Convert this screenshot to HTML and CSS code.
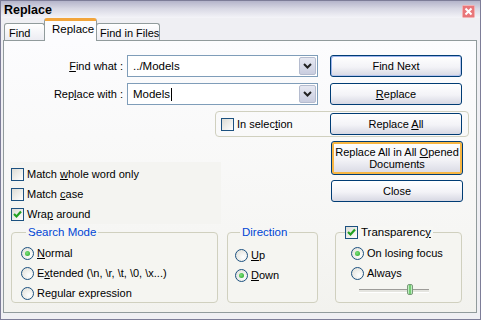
FILE: index.html
```html
<!DOCTYPE html>
<html lang="en">
  <head>
    <meta charset="UTF-8">
    <title>Replace</title>
    <link rel="stylesheet" href="styles.css">
  </head>
  <body>
    <div class="window">
      <div class="titlebar">
        <span class="title">Replace</span>
        <span class="close">
          <svg width="13" height="13" viewBox="0 0 13 13">
            <rect x="0.5" y="0.5" width="12" height="12" rx="1" fill="#e8767a" stroke="#f3b2b4"/>
            <path d="M3.5 3.5 L9.5 9.5 M9.5 3.5 L3.5 9.5" stroke="#fff" stroke-width="2"/>
          </svg>
        </span>
      </div>

      <div class="tabs">
        <div class="tab tab-find">Find</div>
        <div class="tab tab-replace active">Replace</div>
        <div class="tab tab-files">Find in Files</div>
      </div>

      <div class="panel">
        <!-- search / replace fields -->
        <div class="field-row">
          <span class="field-label"><u>F</u>ind what :</span>
          <div class="combo">
            <span class="combo-text">../Models</span>
            <span class="combo-btn"><svg width="9" height="6" viewBox="0 0 9 6"><path d="M1 1 L4.5 4.5 L8 1" fill="none" stroke="#222" stroke-width="2"/></svg></span>
          </div>
          <button class="btn focused">Find Next</button>
        </div>
        <div class="field-row">
          <span class="field-label">Rep<u>l</u>ace with :</span>
          <div class="combo">
            <span class="combo-text">Models<span class="caret"></span></span>
            <span class="combo-btn"><svg width="9" height="6" viewBox="0 0 9 6"><path d="M1 1 L4.5 4.5 L8 1" fill="none" stroke="#222" stroke-width="2"/></svg></span>
          </div>
          <button class="btn"><u>R</u>eplace</button>
        </div>

        <div class="selection-box">
          <span class="check"></span>
          <span class="check-label">In selec<u>t</u>ion</span>
          <button class="btn">Replace <u>A</u>ll</button>
        </div>

        <!-- options and remaining buttons -->
        <div class="middle">
          <div class="options">
            <div class="opt-row"><span class="check"></span><span class="check-label">Match <u>w</u>hole word only</span></div>
            <div class="opt-row"><span class="check"></span><span class="check-label">Match <u>c</u>ase</span></div>
            <div class="opt-row"><span class="check on"><svg width="11" height="11" viewBox="0 0 11 11"><path d="M2 5 L4.5 7.5 L9 2.5" fill="none" stroke="#21a121" stroke-width="2.2"/></svg></span><span class="check-label">Wra<u>p</u> around</span></div>
          </div>
          <div class="side-buttons">
            <button class="btn tall hot">Replace All in All <u>O</u>pened<br>Documents</button>
            <button class="btn">Close</button>
          </div>
        </div>

        <!-- group boxes -->
        <div class="groups">
          <fieldset class="group group-mode">
            <legend>Search Mode</legend>
            <div class="radio-row"><span class="radio on"></span><span><u>N</u>ormal</span></div>
            <div class="radio-row"><span class="radio"></span><span>E<u>x</u>tended (\n, \r, \t, \0, \x...)</span></div>
            <div class="radio-row"><span class="radio"></span><span>Re<u>g</u>ular expression</span></div>
          </fieldset>
          <fieldset class="group group-dir">
            <legend>Direction</legend>
            <div class="radio-row"><span class="radio"></span><span><u>U</u>p</span></div>
            <div class="radio-row"><span class="radio on"></span><span><u>D</u>own</span></div>
          </fieldset>
          <fieldset class="group group-trans">
            <legend><span class="check on"><svg width="11" height="11" viewBox="0 0 11 11"><path d="M2 5 L4.5 7.5 L9 2.5" fill="none" stroke="#21a121" stroke-width="2.2"/></svg></span><span class="check-label">Transparenc<u>y</u></span></legend>
            <div class="radio-row"><span class="radio on"></span><span>On losing focus</span></div>
            <div class="radio-row"><span class="radio"></span><span>Always</span></div>
            <div class="slider">
              <div class="track"></div>
              <div class="thumb"></div>
            </div>
          </fieldset>
        </div>
      </div>
    </div>
  </body>
</html>
```

FILE: styles.css
```css
body {
  margin: 0;
  font-family: "Liberation Sans", Arial, sans-serif;
  font-size: 11px;
  color: #000;
  background: #ecebf2;
}

u {
  text-decoration: underline;
}

.window {
  width: 481px;
  height: 320px;
  box-sizing: border-box;
  border: 1px solid #7d7d98;
  padding: 0 3px 6px 2px;
  background: #efeff3;
}

.titlebar {
  height: 17px;
  margin: 0 -3px 0 -2px;
  padding: 0 5px 0 3px;
  display: flex;
  align-items: center;
  justify-content: space-between;
  background: linear-gradient(#b4b4ca, #d8d8e4 45%, #f4f4f8);
}

.title {
  font-weight: bold;
  font-size: 12.5px;
  padding-top: 1px;
}

.close {
  display: flex;
  margin-top: 3px;
}

.tabs {
  height: 22px;
  padding-left: 1px;
  display: flex;
  align-items: flex-end;
}

.tab {
  box-sizing: border-box;
  height: 17px;
  border: 1px solid #919b9c;
  border-bottom: none;
  border-radius: 3px 3px 0 0;
  background: linear-gradient(#ffffff, #ececf2);
  padding: 3px 0 0 4px;
  line-height: 13px;
  white-space: nowrap;
}

.tab-find { width: 41px; }
.tab-replace { width: 53px; }
.tab-files { width: 64px; padding-left: 3px; }

.tab.active {
  height: 23px;
  margin: 0 -1px -1px -1px;
  background: #fcfcfe;
  border-top: 3px solid #f2a53c;
  padding: 2px 0 0 7px;
  position: relative;
  z-index: 1;
  font-size: 11.5px;
}

.panel {
  box-sizing: border-box;
  height: 273px;
  border: 1px solid #919b9c;
  background: linear-gradient(#fcfcfe, #f6f6f4 70%, #f2f2ee);
  padding-top: 14px;
}

.field-row {
  display: flex;
  align-items: center;
  height: 22px;
  margin-bottom: 6px;
}

.field-label {
  width: 119px;
  text-align: right;
  margin-right: 4px;
}

.combo {
  box-sizing: border-box;
  width: 191px;
  height: 22px;
  border: 1px solid #7f9db9;
  background: #fff;
  display: flex;
  align-items: center;
  justify-content: space-between;
  padding: 0 1px 0 5px;
  margin-right: 12px;
}

.combo-text {
  display: flex;
  align-items: center;
  font-size: 11.5px;
}

.caret {
  width: 1px;
  height: 13px;
  background: #000;
  margin-left: 1px;
}

.combo-btn {
  box-sizing: border-box;
  width: 17px;
  height: 18px;
  border: 1px solid #b5bccf;
  border-radius: 2px;
  background: linear-gradient(#e6e8f2, #c9cddf);
  display: flex;
  align-items: center;
  justify-content: center;
}

.btn {
  box-sizing: border-box;
  width: 132px;
  height: 22px;
  border: 1px solid #003c74;
  border-radius: 3px;
  background: linear-gradient(#ffffff, #f3f3f7 55%, #d7d8e3);
  font: inherit;
  color: #000;
  padding: 0;
  line-height: 12px;
}

.btn.focused {
  box-shadow: inset 1px 1px 0 #9db4ec, inset -1px -1px 0 #b4c4ee;
}

.btn.hot {
  box-shadow: inset 0 0 0 2px #f7b643;
}

.btn.tall {
  height: 34px;
}

.selection-box {
  box-sizing: border-box;
  width: 254px;
  height: 26px;
  margin-left: 211px;
  margin-top: 1px;
  border: 1px solid #d0d0bf;
  border-radius: 4px;
  display: flex;
  align-items: center;
  padding: 0 6px 0 5px;
}

.selection-box .btn {
  margin-left: auto;
}

.check {
  box-sizing: border-box;
  width: 13px;
  height: 13px;
  border: 1px solid #1c5180;
  background: linear-gradient(135deg, #dcdcd5, #ffffff);
  display: inline-flex;
  align-items: center;
  justify-content: center;
  flex-shrink: 0;
}

.check-label {
  margin-left: 3px;
}

.middle {
  display: flex;
  align-items: flex-start;
  margin-top: 4px;
}

.options {
  width: 210px;
  margin: 21px 110px 0 6px;
  padding: 2px 0 0 1px;
  background: #f4f4f1;
}

.opt-row {
  height: 20px;
  display: flex;
  align-items: center;
}

.side-buttons {
  display: flex;
  flex-direction: column;
  gap: 5px;
}

.groups {
  display: flex;
  align-items: flex-start;
  margin-top: 2px;
  padding-left: 7px;
}

.group {
  box-sizing: border-box;
  height: 77px;
  margin: 0;
  border: 1px solid #d0d0bf;
  border-radius: 4px;
  background: #f5f5f1;
  padding: 0;
}

.group legend {
  color: #0046d5;
  padding: 0 2px;
  margin-left: 5px;
  line-height: 13px;
  font-size: 11.5px;
}

.group-mode {
  width: 207px;
  padding: 4px 0 0 9px;
  margin-right: 9px;
}

.group-dir {
  width: 91px;
  padding: 6px 0 0 7px;
  margin-right: 17px;
}

.group-trans {
  width: 127px;
  padding: 4px 0 0 15px;
}

.group-trans legend {
  color: #000;
  margin-left: -6px;
  padding: 0 2px 0 0;
  display: flex;
  align-items: center;
  background: #f7f7f4;
}

.radio-row {
  height: 20px;
  display: flex;
  align-items: center;
  gap: 3px;
}

.radio {
  box-sizing: border-box;
  width: 13px;
  height: 13px;
  border: 1px solid #1c5180;
  border-radius: 50%;
  background: radial-gradient(circle at 65% 65%, #ffffff, #dcdcd5);
  display: flex;
  align-items: center;
  justify-content: center;
  flex-shrink: 0;
}

.radio.on::after {
  content: "";
  width: 5px;
  height: 5px;
  border-radius: 50%;
  background: radial-gradient(circle at 40% 40%, #7ee27e, #21a121);
}

.slider {
  position: relative;
  height: 14px;
  width: 70px;
  margin-left: 8px;
}

.track {
  position: absolute;
  left: 0;
  right: 0;
  top: 6px;
  height: 2px;
  border-top: 1px solid #9d9c99;
  border-bottom: 1px solid #ffffff;
  background: #e5e5e0;
}

.thumb {
  position: absolute;
  left: 48px;
  top: 1px;
  width: 6px;
  height: 11px;
  box-sizing: border-box;
  border: 1px solid #7a9a7a;
  border-radius: 2px;
  background: linear-gradient(90deg, #e8f8e8, #4cbf4c, #e8f8e8);
}
```
